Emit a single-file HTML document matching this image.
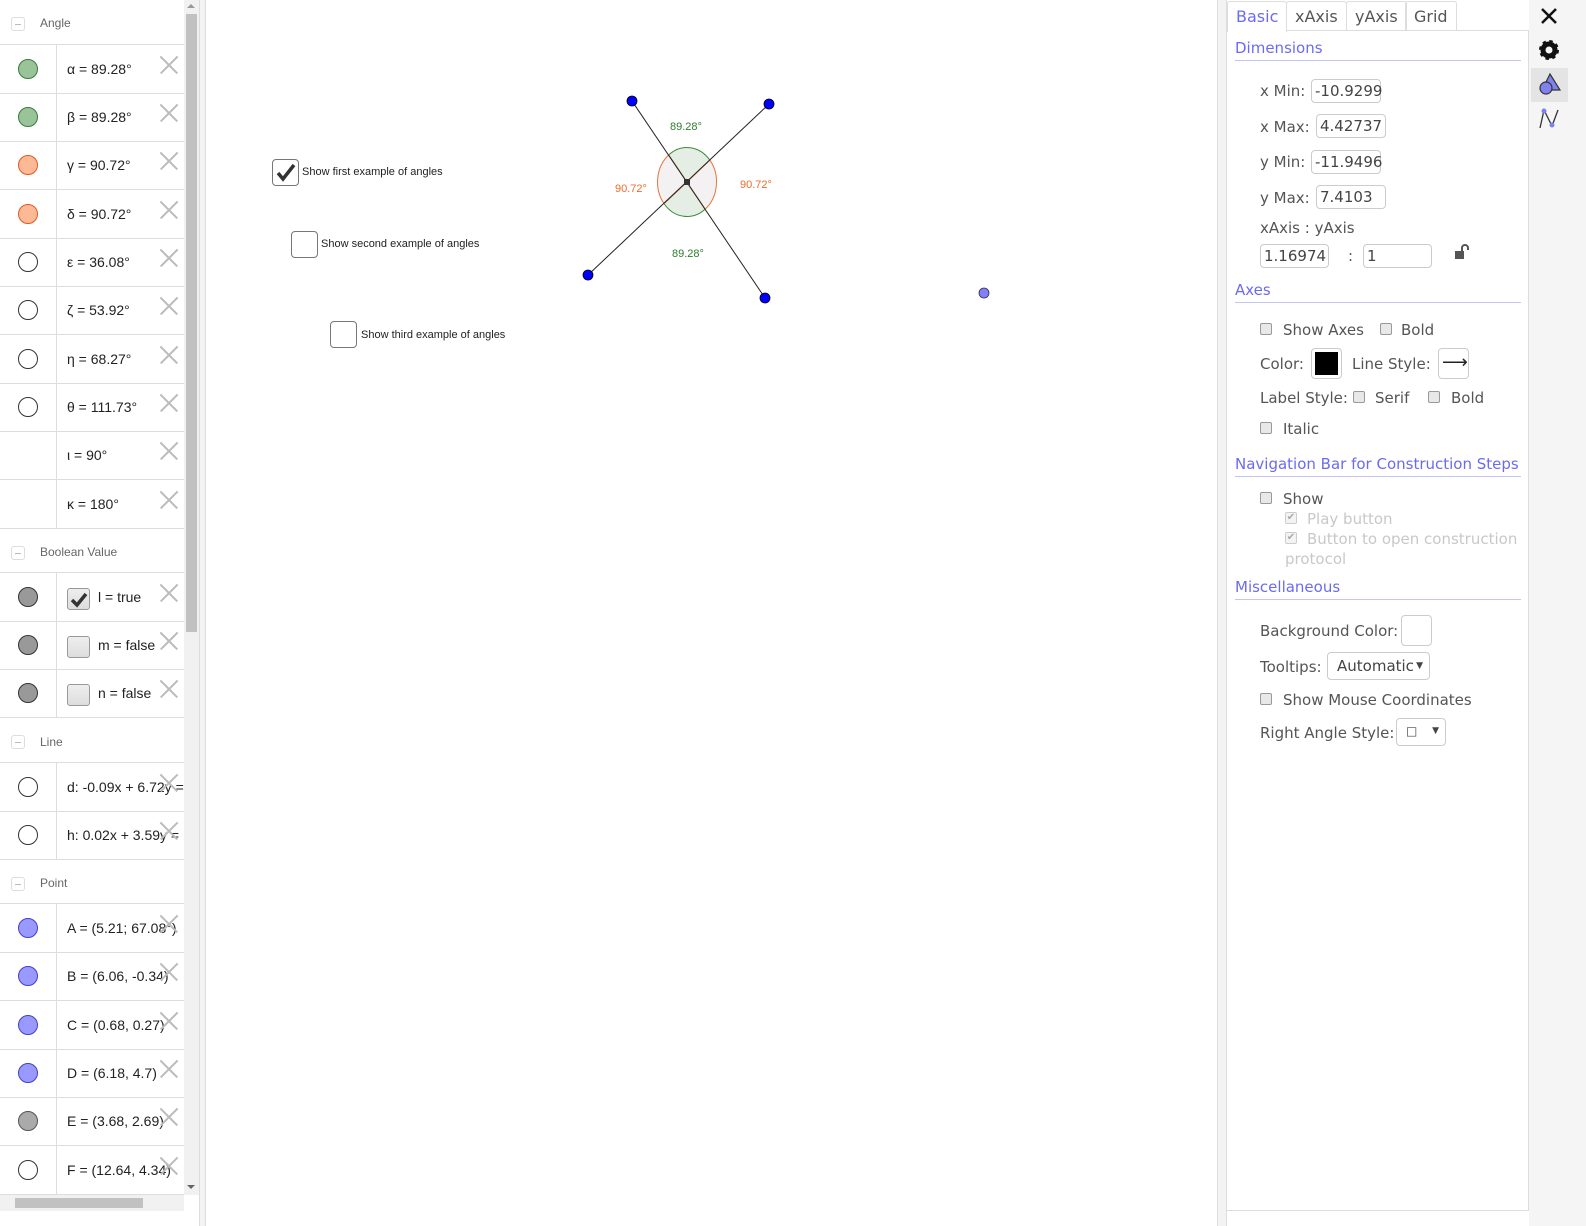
<!DOCTYPE html>
<html><head><meta charset="utf-8"><style>
*{margin:0;padding:0;box-sizing:border-box}
body{width:1586px;height:1226px;position:relative;overflow:hidden;background:#fff;font-family:"Liberation Sans",sans-serif;}
.a{position:absolute}
.hdr{position:absolute;left:0;width:184px;border-bottom:1px solid #ddd;font-size:12px;color:#666}
.hdr .m{position:absolute;left:11px;width:14px;height:14px;border:1px solid #ddd;border-radius:3px}
.hdr .m:after{content:"";position:absolute;left:3px;top:6px;width:6px;height:1px;background:#bbb}
.hdr span{position:absolute;left:40px}
.row{position:absolute;left:0;width:184px;height:49px;border-bottom:1px solid #ddd;font-size:14px;color:#222;overflow:hidden}
.row .c{position:absolute;left:18px;top:14px;width:20px;height:20px;border-radius:50%;border:1px solid #333}
.row .v{position:absolute;left:56px;top:0;bottom:0;border-left:1px solid #ddd}
.row .t{position:absolute;left:67px;top:16px;white-space:nowrap;font-family:"Liberation Sans",sans-serif}
.row .x{position:absolute;left:160px;top:11px;width:18px;height:18px}
.row .x:before,.row .x:after{content:"";position:absolute;left:-3px;top:8px;width:24px;height:1.5px;background:#bbb;transform:rotate(45deg)}
.row .x:after{transform:rotate(-45deg)}
.cb{position:absolute;left:67px;top:15px;width:23px;height:22px;border:1px solid #999;border-radius:3px;background:linear-gradient(#eee,#ddd)}
.sec{position:absolute;left:1235px;width:286px;border-bottom:1px solid #c5c5f5;height:22px;font-family:"DejaVu Sans",sans-serif;font-size:15px;color:#6b6bf0}
.l{position:absolute;font-family:"DejaVu Sans",sans-serif;font-size:15px;color:#555;white-space:nowrap}
.in{position:absolute;height:24px;border:1px solid #ccc;border-radius:4px;font-family:"DejaVu Sans",sans-serif;font-size:15px;color:#444;padding:2px 3px}
.sq{position:absolute;width:12px;height:12px;border:1px solid #999;border-radius:2px;background:#e8e8e8}
.gl{position:absolute;font-family:"DejaVu Sans",sans-serif;font-size:15px;color:#c8c8c8;white-space:nowrap}
.tab{position:absolute;top:1px;height:30px;border:1px solid #ddd;border-bottom:none;border-radius:3px 3px 0 0;font-family:"DejaVu Sans",sans-serif;font-size:16px;color:#555;padding:5px 8px 0}
.ck{position:absolute;width:12px;height:12px;border:1px solid #ccc;border-radius:2px;background:#f3f3f3;font-size:10px;line-height:10px;color:#aaa;text-align:center}
</style></head><body>

<div class="hdr" style="top:0;height:45px"><div class="m" style="top:17px"></div><span style="top:16px">Angle</span></div>
<div class="row" style="top:45px"><div class="c" style="background:#99c499;border-color:#3a7a3a"></div><div class="v"></div><div class="t">α = 89.28°</div><div class="x"></div></div>
<div class="row" style="top:93px"><div class="c" style="background:#99c499;border-color:#3a7a3a"></div><div class="v"></div><div class="t">β = 89.28°</div><div class="x"></div></div>
<div class="row" style="top:141px"><div class="c" style="background:#fcb995;border-color:#e05a20"></div><div class="v"></div><div class="t">γ = 90.72°</div><div class="x"></div></div>
<div class="row" style="top:190px"><div class="c" style="background:#fcb995;border-color:#e05a20"></div><div class="v"></div><div class="t">δ = 90.72°</div><div class="x"></div></div>
<div class="row" style="top:238px"><div class="c"></div><div class="v"></div><div class="t">ε = 36.08°</div><div class="x"></div></div>
<div class="row" style="top:286px"><div class="c"></div><div class="v"></div><div class="t">ζ = 53.92°</div><div class="x"></div></div>
<div class="row" style="top:335px"><div class="c"></div><div class="v"></div><div class="t">η = 68.27°</div><div class="x"></div></div>
<div class="row" style="top:383px"><div class="c"></div><div class="v"></div><div class="t">θ = 111.73°</div><div class="x"></div></div>
<div class="row" style="top:431px"><div class="v"></div><div class="t">ι = 90°</div><div class="x"></div></div>
<div class="row" style="top:480px"><div class="v"></div><div class="t">κ = 180°</div><div class="x"></div></div>
<div class="hdr" style="top:529px;height:44px"><div class="m" style="top:17px"></div><span style="top:16px">Boolean Value</span></div>
<div class="row" style="top:573px"><div class="c" style="background:#999"></div><div class="v"></div><div class="cb"><svg width="21" height="20" style="position:absolute;left:0;top:0"><path d="M4 11 L9 16 L18 5" stroke="#333" stroke-width="3.5" fill="none"/></svg></div><div class="t" style="left:98px">l = true</div><div class="x"></div></div>
<div class="row" style="top:621px"><div class="c" style="background:#999"></div><div class="v"></div><div class="cb"></div><div class="t" style="left:98px">m = false</div><div class="x"></div></div>
<div class="row" style="top:669px"><div class="c" style="background:#999"></div><div class="v"></div><div class="cb"></div><div class="t" style="left:98px">n = false</div><div class="x"></div></div>
<div class="hdr" style="top:718px;height:45px"><div class="m" style="top:17px"></div><span style="top:17px">Line</span></div>
<div class="row" style="top:763px"><div class="c"></div><div class="v"></div><div class="t">d: -0.09x + 6.72y =</div><div class="x"></div></div>
<div class="row" style="top:811px"><div class="c"></div><div class="v"></div><div class="t">h: 0.02x + 3.59y =</div><div class="x"></div></div>
<div class="hdr" style="top:860px;height:44px"><div class="m" style="top:17px"></div><span style="top:16px">Point</span></div>
<div class="row" style="top:904px"><div class="c" style="background:#9999ff;border-color:#4040cc"></div><div class="v"></div><div class="t">A = (5.21; 67.08°)</div><div class="x"></div></div>
<div class="row" style="top:952px"><div class="c" style="background:#9999ff;border-color:#4040cc"></div><div class="v"></div><div class="t">B = (6.06, -0.34)</div><div class="x"></div></div>
<div class="row" style="top:1001px"><div class="c" style="background:#9999ff;border-color:#4040cc"></div><div class="v"></div><div class="t">C = (0.68, 0.27)</div><div class="x"></div></div>
<div class="row" style="top:1049px"><div class="c" style="background:#9999ff;border-color:#4040cc"></div><div class="v"></div><div class="t">D = (6.18, 4.7)</div><div class="x"></div></div>
<div class="row" style="top:1097px"><div class="c" style="background:#aaa;border-color:#555"></div><div class="v"></div><div class="t">E = (3.68, 2.69)</div><div class="x"></div></div>
<div class="row" style="top:1146px"><div class="c"></div><div class="v"></div><div class="t">F = (12.64, 4.34)</div><div class="x"></div></div>

<div class="a" style="left:184px;top:0;width:15px;height:1195px;background:#f1f1f1"></div>
<div class="a" style="left:186px;top:14px;width:11px;height:618px;background:#c1c1c1"></div>
<div class="a" style="left:187px;top:4px;width:0;height:0;border:4px solid transparent;border-bottom:4px solid #999;border-top:none"></div>
<div class="a" style="left:187px;top:1185px;width:0;height:0;border:4px solid transparent;border-top:4px solid #666;border-bottom:none"></div>
<div class="a" style="left:0;top:1195px;width:184px;height:16px;background:#f1f1f1"></div>
<div class="a" style="left:15px;top:1198px;width:128px;height:10px;background:#c1c1c1"></div>
<div class="a" style="left:199px;top:0;width:7px;height:1226px;background:#f3f3f3;border-left:1px solid #ddd;border-right:1px solid #ddd"></div>

<div class="a" style="left:272px;top:159px;width:27px;height:27px;border:1px solid #777;border-radius:4px"><svg width="25" height="25"><path d="M5 13 L10 19 L21 5" stroke="#333" stroke-width="3.5" fill="none"/></svg></div>
<div class="a" style="left:302px;top:166px;font-size:11px;color:#222">Show first example of angles</div>
<div class="a" style="left:291px;top:231px;width:27px;height:27px;border:1px solid #777;border-radius:4px"></div>
<div class="a" style="left:321px;top:238px;font-size:11px;color:#222">Show second example of angles</div>
<div class="a" style="left:330px;top:321px;width:27px;height:27px;border:1px solid #777;border-radius:4px"></div>
<div class="a" style="left:361px;top:329px;font-size:11px;color:#222">Show third example of angles</div>

<svg class="a" style="left:0;top:0" width="1220" height="400">
<path d="M687 182 L668.7 155 A29.5 34.5 0 0 1 709.9 160.2 Z" fill="#e5eee5" stroke="#3a8a3a" stroke-width="1"/>
<path d="M687 182 L705.2 209.1 A29.5 34.5 0 0 1 664 203.6 Z" fill="#e5eee5" stroke="#3a8a3a" stroke-width="1"/>
<path d="M687 182 L664 203.6 A29.5 34.5 0 0 1 668.7 155 Z" fill="#f3f1f1" stroke="#e8743a" stroke-width="1"/>
<path d="M687 182 L709.9 160.2 A29.5 34.5 0 0 1 705.2 209.1 Z" fill="#f3f1f1" stroke="#e8743a" stroke-width="1"/>
<line x1="632" y1="101" x2="765" y2="298" stroke="#222" stroke-width="1"/>
<line x1="769" y1="104" x2="588" y2="275" stroke="#222" stroke-width="1"/>
<rect x="684" y="179" width="6" height="6" fill="#333"/>
<g fill="#0000ff" stroke="#000" stroke-width="0.8">
<circle cx="632" cy="101" r="5"/><circle cx="769" cy="104" r="5"/><circle cx="588" cy="275" r="5"/><circle cx="765" cy="298" r="5"/>
</g>
<circle cx="984" cy="293" r="5" fill="#7f7fff" stroke="#333" stroke-width="0.8"/>
<g font-family="Liberation Sans" font-size="11">
<text x="670" y="130" fill="#2e7d2e">89.28°</text>
<text x="672" y="257" fill="#2e7d2e">89.28°</text>
<text x="615" y="192" fill="#f06a2a">90.72°</text>
<text x="740" y="188" fill="#f06a2a">90.72°</text>
</g>
</svg>

<div class="a" style="left:1217px;top:0;width:10px;height:1226px;background:#f3f3f3;border-left:1px solid #ddd;border-right:1px solid #ddd"></div>
<div class="a" style="left:1226px;top:30px;width:303px;height:1181px;border:1px solid #ddd;border-left:none"></div>
<div class="a" style="left:1529px;top:0;width:57px;height:1226px;background:#f5f5f5"></div>
<div class="tab" style="left:1227px;color:#6b6bf0;background:#fff;height:31px">Basic</div>
<div class="tab" style="left:1286px">xAxis</div>
<div class="tab" style="left:1346px">yAxis</div>
<div class="tab" style="left:1405px">Grid</div>

<div class="sec" style="top:39px">Dimensions</div>
<div class="l" style="left:1260px;top:82px">x Min:</div><div class="in" style="left:1311px;top:79px;width:70px">-10.9299</div>
<div class="l" style="left:1260px;top:118px">x Max:</div><div class="in" style="left:1316px;top:114px;width:70px">4.42737</div>
<div class="l" style="left:1260px;top:153px">y Min:</div><div class="in" style="left:1311px;top:150px;width:70px">-11.9496</div>
<div class="l" style="left:1260px;top:189px">y Max:</div><div class="in" style="left:1316px;top:185px;width:70px">7.4103</div>
<div class="l" style="left:1260px;top:219px">xAxis : yAxis</div>
<div class="in" style="left:1260px;top:244px;width:69px">1.16974</div>
<div class="l" style="left:1348px;top:247px">:</div>
<div class="in" style="left:1363px;top:244px;width:69px">1</div>
<svg class="a" style="left:1453px;top:244px" width="20" height="18"><rect x="2" y="7" width="9" height="8" fill="#555"/><path d="M9 7 V4 A3 3 0 0 1 15 4 V6" stroke="#555" stroke-width="2" fill="none"/></svg>

<div class="sec" style="top:281px">Axes</div>
<div class="sq" style="left:1260px;top:323px"></div><div class="l" style="left:1283px;top:321px">Show Axes</div>
<div class="sq" style="left:1380px;top:323px"></div><div class="l" style="left:1401px;top:321px">Bold</div>
<div class="l" style="left:1260px;top:355px">Color:</div>
<div class="in" style="left:1311px;top:348px;width:31px;height:31px;padding:3px"><div style="width:23px;height:23px;background:#000"></div></div>
<div class="l" style="left:1352px;top:355px">Line Style:</div>
<div class="in" style="left:1438px;top:348px;width:31px;height:31px;font-size:18px;color:#222;padding:0 3px;line-height:28px">⟶</div>
<div class="l" style="left:1260px;top:389px">Label Style:</div>
<div class="sq" style="left:1353px;top:391px"></div><div class="l" style="left:1375px;top:389px">Serif</div>
<div class="sq" style="left:1428px;top:391px"></div><div class="l" style="left:1451px;top:389px">Bold</div>
<div class="sq" style="left:1260px;top:422px"></div><div class="l" style="left:1283px;top:420px">Italic</div>

<div class="sec" style="top:455px">Navigation Bar for Construction Steps</div>
<div class="sq" style="left:1260px;top:492px"></div><div class="l" style="left:1283px;top:490px">Show</div>
<div class="ck" style="left:1285px;top:512px">✔</div><div class="gl" style="left:1307px;top:510px">Play button</div>
<div class="ck" style="left:1285px;top:532px">✔</div><div class="gl" style="left:1307px;top:530px">Button to open construction</div>
<div class="gl" style="left:1285px;top:550px">protocol</div>

<div class="sec" style="top:578px">Miscellaneous</div>
<div class="l" style="left:1260px;top:622px">Background Color:</div>
<div class="in" style="left:1401px;top:615px;width:31px;height:31px"></div>
<div class="l" style="left:1260px;top:658px">Tooltips:</div>
<div class="in" style="left:1327px;top:652px;width:103px;height:28px;padding:4px 9px">Automatic <span style="font-size:9px;position:absolute;right:6px;top:8px">▼</span></div>
<div class="sq" style="left:1260px;top:693px"></div><div class="l" style="left:1283px;top:691px">Show Mouse Coordinates</div>
<div class="l" style="left:1260px;top:724px">Right Angle Style:</div>
<div class="in" style="left:1396px;top:718px;width:50px;height:28px;padding:5px 9px;font-size:12px">□ <span style="font-size:9px;position:absolute;right:6px;top:7px">▼</span></div>

<svg class="a" style="left:1539px;top:6px" width="20" height="20"><path d="M3 3 L17 17 M17 3 L3 17" stroke="#111" stroke-width="2.5"/></svg>
<svg class="a" style="left:1538px;top:39px" width="22" height="22"><circle cx="11" cy="11" r="6" fill="none" stroke="#111" stroke-width="5"/><circle cx="11" cy="11" r="8.5" fill="none" stroke="#111" stroke-width="3" stroke-dasharray="3.34 3.34"/><circle cx="11" cy="11" r="2.5" fill="#f5f5f5"/></svg>
<div class="a" style="left:1531px;top:68px;width:37px;height:34px;background:#e4e4e4"></div>
<svg class="a" style="left:1536px;top:70px" width="28" height="28"><path d="M14 4 L24 20 L6 20 Z" fill="#8080f0" stroke="#333" stroke-width="1.2"/><circle cx="10" cy="18" r="6" fill="#8080f0" stroke="#333" stroke-width="1.2"/></svg>
<svg class="a" style="left:1536px;top:104px" width="28" height="28"><path d="M4 24 L8 6 L16 22 L22 6" fill="none" stroke="#333" stroke-width="1.3"/><circle cx="8" cy="7" r="2.5" fill="#8080f0"/><circle cx="16" cy="21" r="2.5" fill="#8080f0"/></svg>
</body></html>
